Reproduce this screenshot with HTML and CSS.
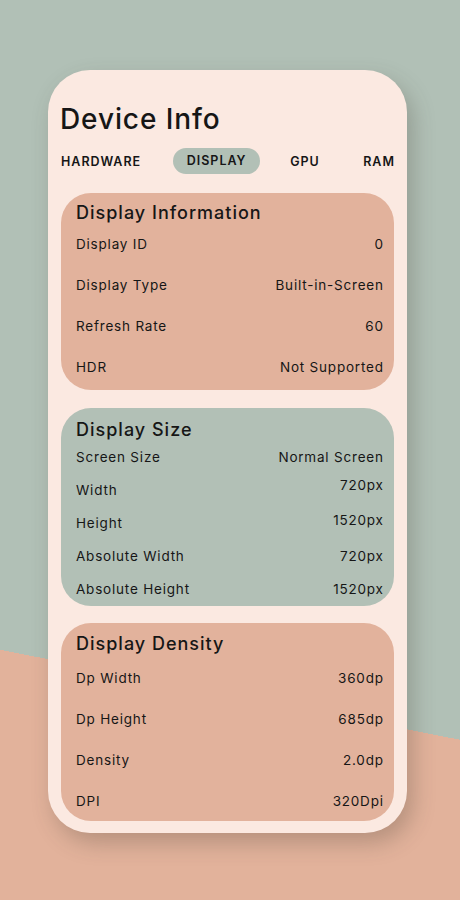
FILE: index.html
```html
<!DOCTYPE html>
<html lang="en">
<head>
<meta charset="utf-8">
<title>Device Info</title>
<link rel="stylesheet" href="styles.css">
</head>
<body>
<div class="phone">
  <h1 class="title">Device Info</h1>
  <nav class="tabs">
    <span class="tab">HARDWARE</span>
    <span class="tab tab-active">DISPLAY</span>
    <span class="tab tab-gpu">GPU</span>
    <span class="tab tab-ram">RAM</span>
  </nav>

  <section class="card card-salmon card-info">
    <h2 class="card-title">Display Information</h2>
    <div class="row"><span>Display ID</span><span>0</span></div>
    <div class="row"><span>Display Type</span><span>Built-in-Screen</span></div>
    <div class="row"><span>Refresh Rate</span><span>60</span></div>
    <div class="row"><span>HDR</span><span>Not Supported</span></div>
  </section>

  <section class="card card-sage card-size">
    <h2 class="card-title">Display Size</h2>
    <div class="row"><span>Screen Size</span><span>Normal Screen</span></div>
    <div class="row row-raised"><span>Width</span><span class="val">720px</span></div>
    <div class="row row-raised-sm"><span>Height</span><span class="val">1520px</span></div>
    <div class="row"><span>Absolute Width</span><span>720px</span></div>
    <div class="row"><span>Absolute Height</span><span>1520px</span></div>
  </section>

  <section class="card card-salmon card-density">
    <h2 class="card-title">Display Density</h2>
    <div class="row"><span>Dp Width</span><span>360dp</span></div>
    <div class="row"><span>Dp Height</span><span>685dp</span></div>
    <div class="row"><span>Density</span><span>2.0dp</span></div>
    <div class="row"><span>DPI</span><span>320Dpi</span></div>
  </section>
</div>
</body>
</html>
```

FILE: styles.css
```css
html {
  height: 100%;
  background: linear-gradient(191.07deg, #b1c0b6 726px, #e2b29b 726px);
}
body {
  margin: 0;
  height: 900px;
  font-family: Inter, "Noto Sans", sans-serif;
  color: #161616;
}
.phone {
  margin: 70px 0 0 48px;
  width: 359px;
  height: 763px;
  box-sizing: border-box;
  padding: 32px 13px 0 13px;
  background: #fbe9e1;
  border-radius: 42px;
  box-shadow: 6px 10px 22px rgba(70, 60, 50, 0.28);
}
.title {
  margin: 0 0 0 -1px;
  font-size: 28px;
  line-height: 34px;
  font-weight: 500;
  letter-spacing: 0.9px;
  height: 34px;
}
.tabs {
  display: flex;
  align-items: center;
  margin-top: 12px;
  height: 26px;
}
.tab {
  font-size: 12.5px;
  font-weight: 600;
  letter-spacing: 1px;
}
.tab-active {
  margin-left: 32px;
  background: #b2c0b6;
  border-radius: 13px;
  height: 26px;
  line-height: 26px;
  width: 87px;
  text-align: center;
}
.tab-gpu {
  margin-left: 30px;
}
.tab-ram {
  margin-left: auto;
  margin-right: -1px;
}
.card {
  border-radius: 30px;
  padding: 9px 11px 3px 15px;
  margin-top: 19px;
}
.card-salmon { background: #e2b29c; }
.card-sage { background: #b2c0b6; }
.card-size { margin-top: 18px; padding-top: 11px; padding-bottom: 1px; }
.card-density { margin-top: 17px; padding-top: 10px; padding-bottom: 0; }
.card-title {
  margin: 0;
  font-size: 18px;
  line-height: 21px;
  font-weight: 500;
  letter-spacing: 1px;
}
.row {
  display: flex;
  justify-content: space-between;
  align-items: center;
  height: 41px;
  font-size: 13.5px;
  letter-spacing: 0.8px;
}
.row span:last-child { margin-right: -0.8px; }
.card-size .card-title { line-height: 22px; margin-bottom: -1px; }
.card-size .row { height: 33px; }
.card-density .card-title { line-height: 22px; margin-bottom: 2px; }
.row-raised .val { margin-bottom: 10px; }
.row-raised-sm .val { margin-bottom: 6px; }
```
